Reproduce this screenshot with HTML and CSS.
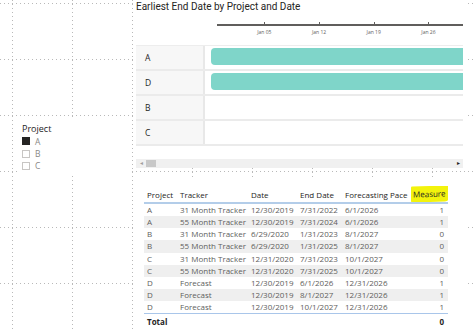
FILE: index.html
```html
<!DOCTYPE html>
<html lang="en">
<head>
    <meta charset="UTF-8">
    <title>Earliest End Date</title>
    <link rel="stylesheet" href="styles.css">
</head>
<body>
    <div class="canvas">
        <!-- slicer on the left -->
        <div class="side">
            <div class="slicer">
                <div class="slicer-title">Project</div>
                <ul class="slicer-list">
                    <li><span class="box checked"></span>A</li>
                    <li><span class="box"></span>B</li>
                    <li><span class="box"></span>C</li>
                </ul>
            </div>
        </div>

        <div class="visuals">
            <!-- gantt chart -->
            <section class="gantt">
                <h1 class="gantt-title">Earliest End Date by Project and Date</h1>
                <div class="axis">
                    <div class="axis-line"></div>
                    <div class="ticks">
                        <span class="tick">Jan 05</span>
                        <span class="tick">Jan 12</span>
                        <span class="tick">Jan 19</span>
                        <span class="tick">Jan 26</span>
                    </div>
                </div>
                <div class="gantt-rows">
                    <div class="gantt-row">
                        <div class="gantt-label">A</div>
                        <div class="gantt-cell"><div class="bar"></div></div>
                    </div>
                    <div class="gantt-row">
                        <div class="gantt-label">D</div>
                        <div class="gantt-cell"><div class="bar"></div></div>
                    </div>
                    <div class="gantt-row">
                        <div class="gantt-label">B</div>
                        <div class="gantt-cell"></div>
                    </div>
                    <div class="gantt-row">
                        <div class="gantt-label">C</div>
                        <div class="gantt-cell"></div>
                    </div>
                </div>
                <div class="scrollbar">
                    <span class="arrow">&#9666;</span>
                    <span class="thumb"></span>
                    <span class="arrow right">&#9656;</span>
                </div>
            </section>

            <!-- table -->
            <section class="table-visual">
                <table class="grid-table">
                    <thead>
                        <tr>
                            <th class="c-project">Project</th>
                            <th class="c-tracker">Tracker</th>
                            <th class="c-date">Date</th>
                            <th class="c-end">End Date</th>
                            <th class="c-pace">Forecasting Pace</th>
                            <th class="c-measure"><span class="mark">Measure</span></th>
                        </tr>
                    </thead>
                    <tbody>
                        <tr><td>A</td><td>31 Month Tracker</td><td>12/30/2019</td><td>7/31/2022</td><td>6/1/2026</td><td class="num">1</td></tr>
                        <tr><td>A</td><td>55 Month Tracker</td><td>12/30/2019</td><td>7/31/2024</td><td>6/1/2026</td><td class="num">1</td></tr>
                        <tr><td>B</td><td>31 Month Tracker</td><td>6/29/2020</td><td>1/31/2023</td><td>8/1/2027</td><td class="num">0</td></tr>
                        <tr><td>B</td><td>55 Month Tracker</td><td>6/29/2020</td><td>1/31/2025</td><td>8/1/2027</td><td class="num">0</td></tr>
                        <tr><td>C</td><td>31 Month Tracker</td><td>12/31/2020</td><td>7/31/2023</td><td>10/1/2027</td><td class="num">0</td></tr>
                        <tr><td>C</td><td>55 Month Tracker</td><td>12/31/2020</td><td>7/31/2025</td><td>10/1/2027</td><td class="num">0</td></tr>
                        <tr><td>D</td><td>Forecast</td><td>12/30/2019</td><td>6/1/2026</td><td>12/31/2026</td><td class="num">1</td></tr>
                        <tr><td>D</td><td>Forecast</td><td>12/30/2019</td><td>8/1/2027</td><td>12/31/2026</td><td class="num">1</td></tr>
                        <tr><td>D</td><td>Forecast</td><td>12/30/2019</td><td>10/1/2027</td><td>12/31/2026</td><td class="num">1</td></tr>
                    </tbody>
                    <tfoot>
                        <tr><td>Total</td><td></td><td></td><td></td><td></td><td class="num">0</td></tr>
                    </tfoot>
                </table>
            </section>
        </div>
    </div>
</body>
</html>
```

FILE: styles.css
```css
* {
    margin: 0;
    padding: 0;
    box-sizing: border-box;
}

body {
    width: 474px;
    height: 331px;
    overflow: hidden;
    background-color: #fff;
    font-family: "Open Sans", "Noto Sans", sans-serif;
    color: #252423;
}

/* canvas with dotted gridlines */
.canvas {
    display: grid;
    grid-template-columns: 135px 331px;
    height: 331px;
    background-image:
        conic-gradient(at 1px 1px, transparent 75%, #b9b9b9 0),
        conic-gradient(at 1px 1px, transparent 75%, #b9b9b9 0);
    background-size: 60px 4px, 4px 56px;
    background-position: 12px 0, 0 59px;
}

/* slicer */
.slicer {
    margin: 118px 0 0 17px;
    width: 113px;
    height: 58px;
    padding: 5px 5px;
    background-color: #fff;
}

.slicer-title {
    font-size: 9px;
    line-height: 12px;
    color: #252423;
}

.slicer-list {
    list-style: none;
}

.slicer-list li {
    display: flex;
    align-items: center;
    gap: 5px;
    height: 12.4px;
    font-size: 8.5px;
    color: #8a8886;
}

.box {
    width: 8px;
    height: 8px;
    border: 1px solid #c8c6c4;
}

.box.checked {
    background-color: #252423;
    border-color: #252423;
}

/* gantt */
.gantt {
    height: 168px;
    padding-left: 1px;
    background-color: #fff;
}

.gantt-title {
    font-family: "Roboto", sans-serif;
    font-weight: 400;
    font-size: 10px;
    line-height: 13px;
    color: #252423;
}

.axis {
    height: 32px;
    padding: 11px 0 0 81px;
}

.axis-line {
    width: 246px;
    height: 2px;
    background-color: #605e5c;
}

.ticks {
    display: flex;
    padding-left: 20px;
}

.tick {
    position: relative;
    width: 54.7px;
    padding-top: 3px;
    text-align: center;
    font-size: 5px;
    color: #605e5c;
}

.tick::before {
    content: "";
    position: absolute;
    left: 50%;
    top: -4px;
    width: 1px;
    height: 3px;
    background-color: #605e5c;
}

.gantt-rows {
    width: 327px;
    border-top: 1px solid #ededed;
}

.gantt-row {
    display: grid;
    grid-template-columns: 69px 1fr;
    height: 25px;
    border-bottom: 2px solid #ebebeb;
}

.gantt-label {
    padding: 6px 0 0 9px;
    font-size: 8.5px;
    color: #252423;
    background-color: #f7f7f7;
    border-right: 2px solid #e8e8e8;
}

.gantt-cell {
    padding: 2px 0 0 6px;
}

.bar {
    height: 17px;
    background-color: #7fd5c9;
    border-radius: 4px 0 0 4px;
}

.scrollbar {
    display: flex;
    align-items: center;
    width: 327px;
    height: 9px;
    margin-top: 13px;
    background-color: #f0f0f0;
}

.arrow {
    width: 10px;
    font-size: 6px;
    line-height: 9px;
    text-align: center;
    color: #a19f9d;
}

.arrow.right {
    margin-left: auto;
    color: #252423;
}

.thumb {
    width: 10px;
    height: 7px;
    background-color: #c8c8c8;
}

/* table */
.table-visual {
    margin-top: 12px;
    height: 151px;
    padding: 6px 0 0 9px;
    background-color: #fff;
}

.grid-table {
    width: 304px;
    border-collapse: collapse;
    table-layout: fixed;
    font-size: 8px;
}

.grid-table th,
.grid-table td {
    padding: 0 0 0 3px;
    text-align: left;
    white-space: nowrap;
    overflow: hidden;
}

.grid-table th {
    height: 17px;
    font-weight: 400;
    color: #252423;
    border-bottom: 2px solid #b3cde9;
}

.grid-table td {
    height: 12.2px;
    line-height: 12px;
    color: #605e5c;
}

.grid-table tbody tr:nth-child(even) td {
    background-color: #efefef;
}

.grid-table tbody tr:last-child td {
    border-bottom: 1px solid #a9c6ea;
}

.grid-table tfoot td {
    height: 15px;
    font-weight: 700;
    color: #252423;
}

.c-project { width: 33px; }
.c-tracker { width: 71px; }
.c-date { width: 49px; }
.c-end { width: 45px; }
.c-pace { width: 68px; }
.c-measure { width: 38px; }

.grid-table .num {
    text-align: right;
    padding-right: 4px;
}

.mark {
    display: inline-block;
    margin-left: -2px;
    padding: 2px 3px 3px 2px;
    background-color: #f3f30c;
    border-radius: 1px 3px 4px 2px;
    transform: skewY(-2deg);
}
```
